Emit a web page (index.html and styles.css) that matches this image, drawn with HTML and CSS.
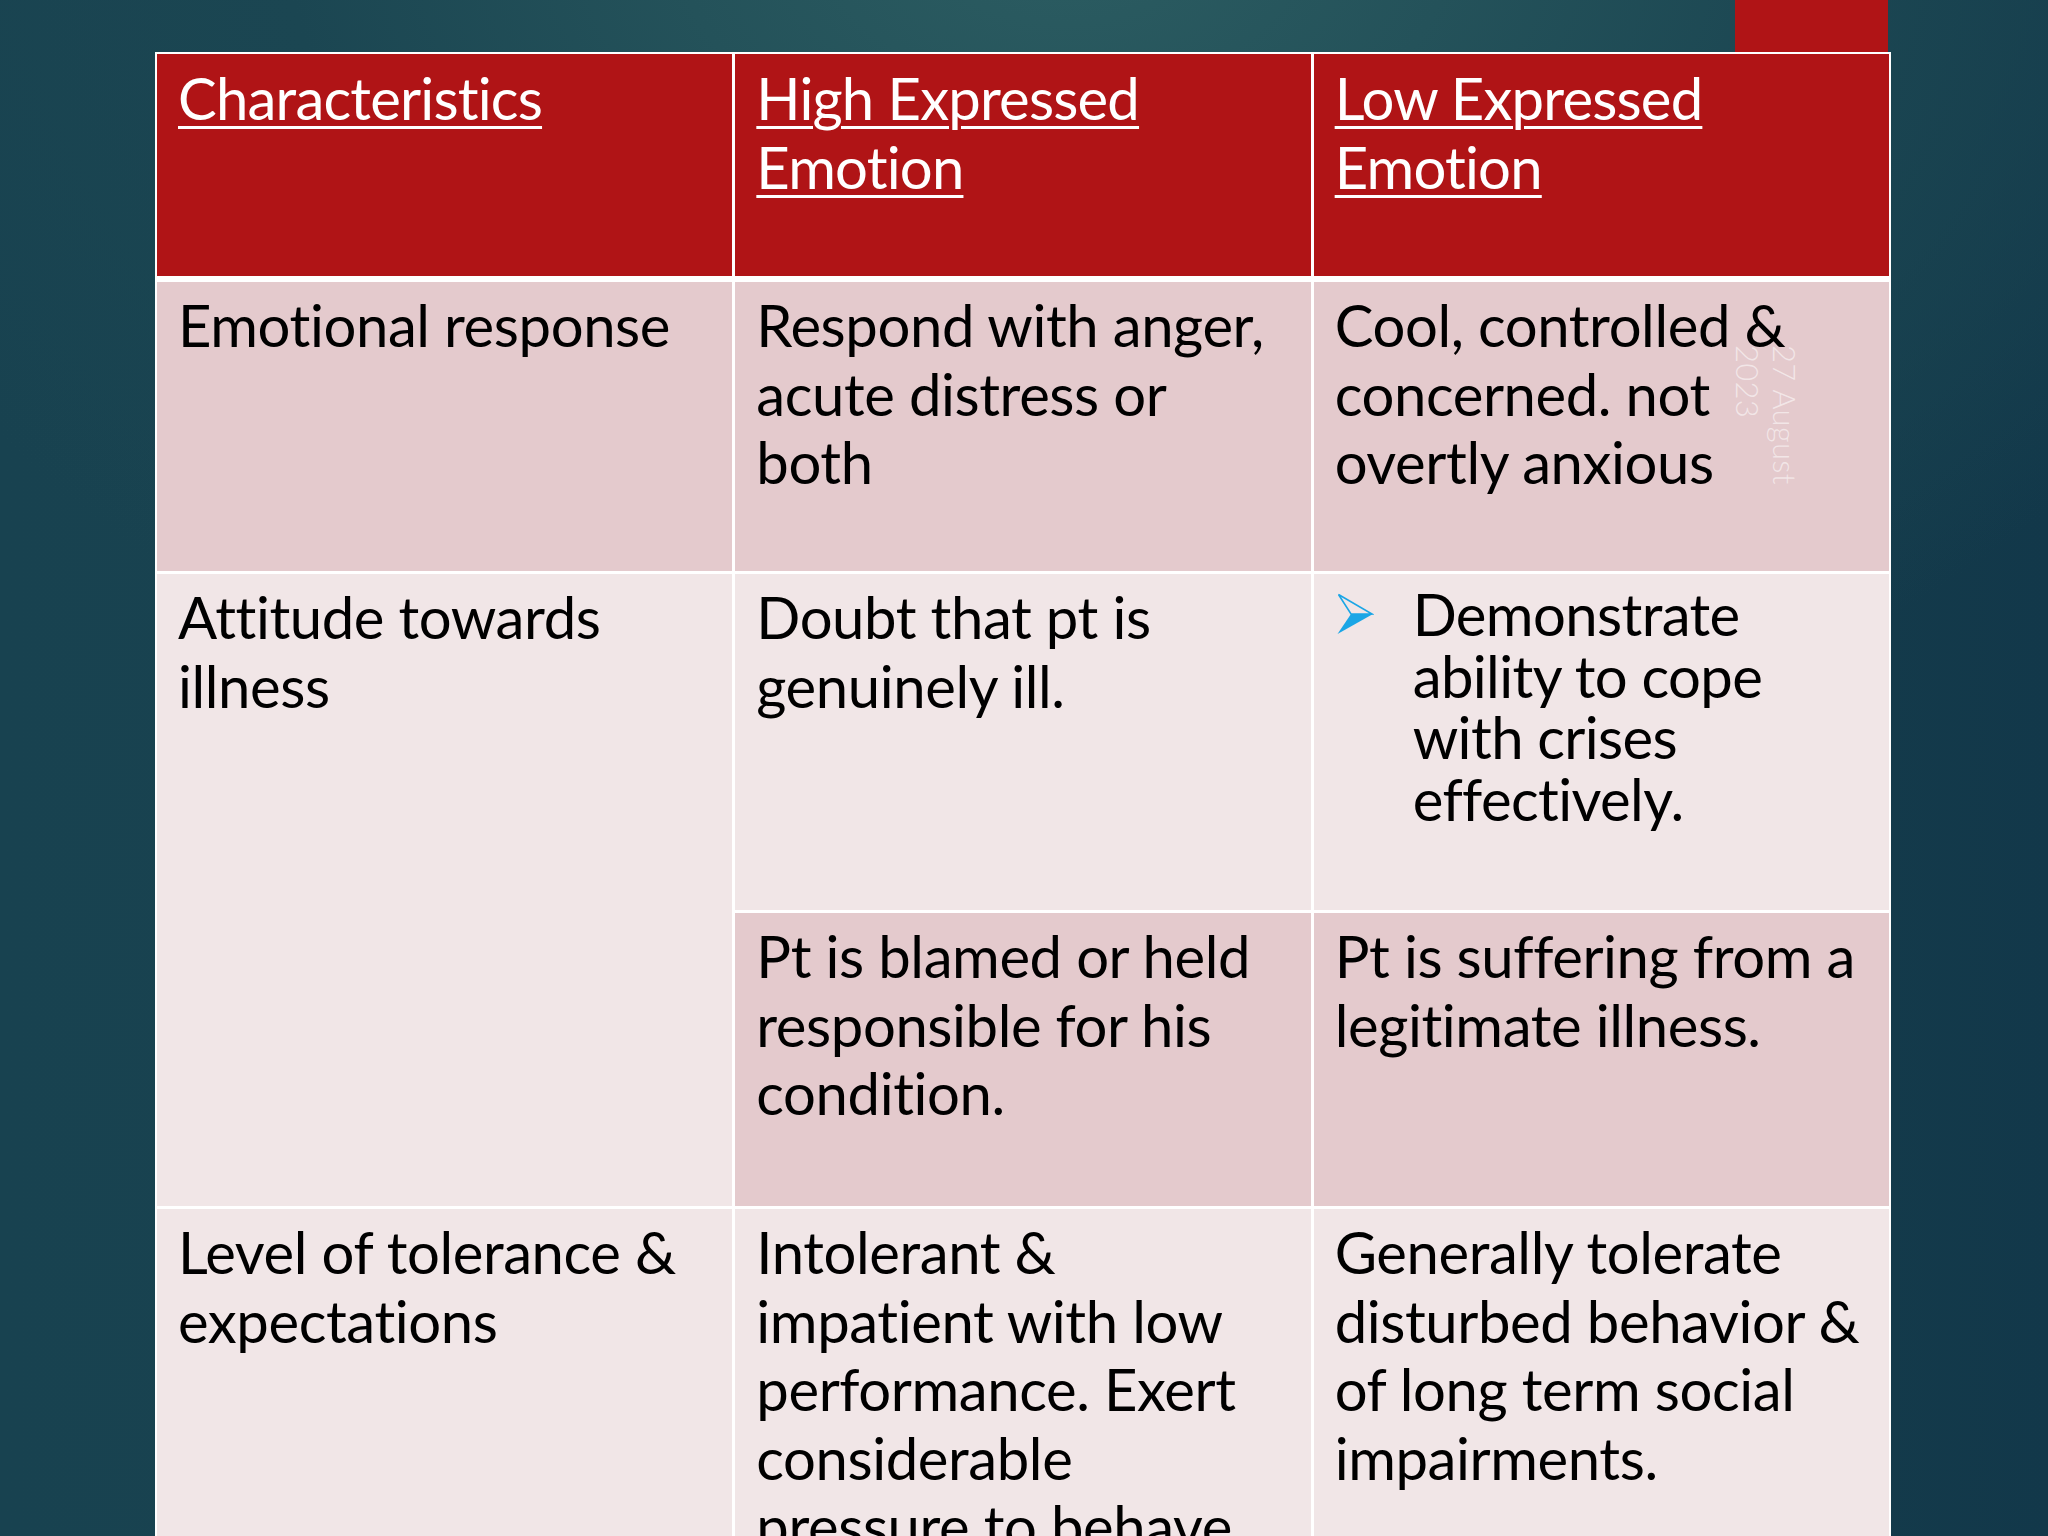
FILE: index.html
```html
<!DOCTYPE html>
<html lang="en">
<head>
<meta charset="utf-8">
<title>Expressed Emotion</title>
<link rel="stylesheet" href="styles.css">
</head>
<body>
<div class="slide">
  <div class="top-strip"><div class="accent"></div></div>
  <div class="ee-table">
    <div class="cell head"><span class="u">Characteristics</span></div>
    <div class="cell head"><span class="u">High Expressed<br>Emotion</span></div>
    <div class="cell head"><span class="u">Low Expressed<br>Emotion</span></div>

    <div class="cell band">Emotional response</div>
    <div class="cell band">Respond with anger,<br>acute distress or<br>both</div>
    <div class="cell band">Cool, controlled &amp;<br>concerned. not<br>overtly anxious</div>

    <div class="cell plain span2">Attitude towards<br>illness</div>
    <div class="cell plain">Doubt that pt is<br>genuinely ill.</div>
    <div class="cell plain">
      <div class="bullet-item">
        <svg class="arrow" width="37" height="42" viewBox="0 0 37 42" aria-hidden="true">
          <polygon points="1.5,1.5 35,21 14,21" fill="none" stroke="#1ba6e6" stroke-width="1.6" stroke-linejoin="miter"/>
          <polygon points="14,21 36,21 0.5,41" fill="#1ba6e6"/>
        </svg>
        <div class="bullet-text">Demonstrate<br>ability to cope<br>with crises<br>effectively.</div>
      </div>
    </div>

    <div class="cell band">Pt is blamed or held<br>responsible for his<br>condition.</div>
    <div class="cell band">Pt is suffering from a<br>legitimate illness.</div>

    <div class="cell plain">Level of tolerance &amp;<br>expectations</div>
    <div class="cell plain">Intolerant &amp;<br>impatient with low<br>performance. Exert<br>considerable<br>pressure to behave</div>
    <div class="cell plain">Generally tolerate<br>disturbed behavior &amp;<br>of long term social<br>impairments.</div>
  </div>
  <div class="date">27 August<br>2023</div>
</div>
</body>
</html>
```

FILE: styles.css
```css
html, body {
  margin: 0;
  padding: 0;
}

body {
  width: 2048px;
  height: 1536px;
  overflow: hidden;
  background: #163e4c;
}

.slide {
  position: relative;
  width: 2048px;
  height: 1536px;
  overflow: hidden;
  background:
    radial-gradient(ellipse 1300px 900px at 52% -5%, #2c5d62 0%, #24525a 30%, #1b4652 60%, rgba(22, 62, 76, 0) 100%),
    linear-gradient(90deg, #184250 0%, #1a4450 40%, #163d4c 80%, #12384a 100%);
  font-family: Lato, "Noto Sans", "Liberation Sans", sans-serif;
  font-feature-settings: "liga" 0;
  font-variant-ligatures: none;
}

.top-strip {
  height: 52px;
  display: flex;
  justify-content: flex-end;
  padding-right: 160px;
}

.accent {
  width: 153px;
  height: 52px;
  background: #b01416;
}

.ee-table {
  margin-left: 155px;
  width: 1736px;
  box-sizing: border-box;
  display: grid;
  grid-template-columns: repeat(3, 1fr);
  grid-template-rows: 225px 289px 336px 293px 420px;
  gap: 3px;
  padding: 2px;
  background: #ffffff;
}

.cell {
  box-sizing: border-box;
  padding: 9px 18px 0 21px;
  font-size: 58px;
  line-height: 68.5px;
  letter-spacing: -0.4px;
  color: #000;
  white-space: nowrap;
}

.head {
  background: #b01416;
  color: #ffffff;
  border-bottom: 3px solid #ffffff;
  padding-top: 10px;
  letter-spacing: -0.8px;
}

.u {
  text-decoration: underline;
  text-decoration-thickness: 3px;
  text-underline-offset: 6px;
}

.band {
  background: #e4cacd;
}

.plain {
  background: #f1e6e7;
}

.span2 {
  grid-row: span 2;
}

.bullet-item {
  display: flex;
  align-items: flex-start;
}

.arrow {
  flex: none;
  margin: 10px 0 0 2px;
}

.bullet-text {
  margin: 0 0 0 39px;
  font-size: 58px;
  line-height: 61.5px;
  letter-spacing: -0.6px;
}

.date {
  position: absolute;
  left: 1729px;
  top: 345px;
  writing-mode: vertical-rl;
  font-size: 31px;
  line-height: 37px;
  font-weight: 300;
  letter-spacing: 0.3px;
  color: rgba(255, 255, 255, 0.55);
  white-space: nowrap;
}
```
